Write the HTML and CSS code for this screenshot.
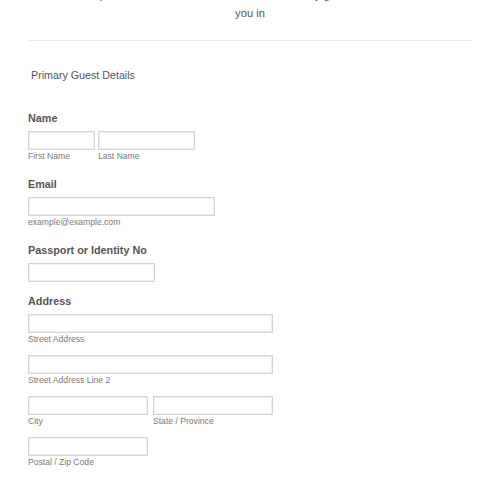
FILE: index.html
```html
<!DOCTYPE html>
<html>
<head>
<meta charset="utf-8">
<link rel="stylesheet" href="styles.css">
</head>
<body>
<div class="page">
  <p class="intro">Please complete the form below with the details of every guest so that we can check you in</p>
  <hr class="divider">
  <div class="section-title">Primary Guest Details</div>

  <div class="field">
    <div class="label">Name</div>
    <div class="row row-name">
      <div class="col"><div class="input w-first"></div><div class="sub">First Name</div></div>
      <div class="col"><div class="input w-last"></div><div class="sub">Last Name</div></div>
    </div>
  </div>

  <div class="field">
    <div class="label">Email</div>
    <div class="input w-email"></div>
    <div class="sub">example@example.com</div>
  </div>

  <div class="field field-plain">
    <div class="label">Passport or Identity No</div>
    <div class="input w-passport"></div>
  </div>

  <div class="field">
    <div class="label">Address</div>
    <div class="addr">
      <div class="col"><div class="input w-street"></div><div class="sub">Street Address</div></div>
      <div class="col"><div class="input w-street"></div><div class="sub">Street Address Line 2</div></div>
      <div class="row row-city">
        <div class="col"><div class="input w-half"></div><div class="sub">City</div></div>
        <div class="col"><div class="input w-half"></div><div class="sub">State / Province</div></div>
      </div>
      <div class="col"><div class="input w-half"></div><div class="sub">Postal / Zip Code</div></div>
    </div>
  </div>
</div>
</body>
</html>
```

FILE: styles.css
```css
html, body {
  margin: 0;
  padding: 0;
  background: #fff;
}
body {
  font-family: "Liberation Sans", Arial, sans-serif;
  color: #555;
  overflow: hidden;
}
.page {
  padding: 0 28px;
}
.intro {
  margin: -14px 12px 0;
  font-size: 11.2px;
  line-height: 18px;
  text-align: center;
  color: #555;
}
.divider {
  margin: 18px 0 0;
  border: 0;
  height: 1px;
  background: #ebebeb;
}
.section-title {
  margin: 26px 0 0 3px;
  font-size: 10.7px;
  line-height: 16px;
  color: #555;
}
.field {
  margin-top: 27px;
}
.field + .field {
  margin-top: 14px;
}
.field-plain + .field {
  margin-top: 11px;
}
.label {
  font-size: 10.8px;
  font-weight: bold;
  line-height: 16px;
  color: #555;
  margin-bottom: 5px;
}
.input {
  box-sizing: border-box;
  height: 19px;
  border: 1px solid #d4d4d4;
  box-shadow: inset 0 0 0 1px #f0f0f0;
  background: #fff;
}
.sub {
  font-size: 8.6px;
  line-height: 12px;
  color: #7a7a7a;
}
.row {
  display: flex;
}
.row-name {
  gap: 3px;
}
.row-city {
  gap: 5px;
}
.addr {
  display: flex;
  flex-direction: column;
  gap: 10px;
}
.w-first { width: 67px; }
.w-last { width: 97px; }
.w-email { width: 187px; }
.w-passport { width: 127px; }
.w-street { width: 245px; }
.w-half { width: 120px; }
```
